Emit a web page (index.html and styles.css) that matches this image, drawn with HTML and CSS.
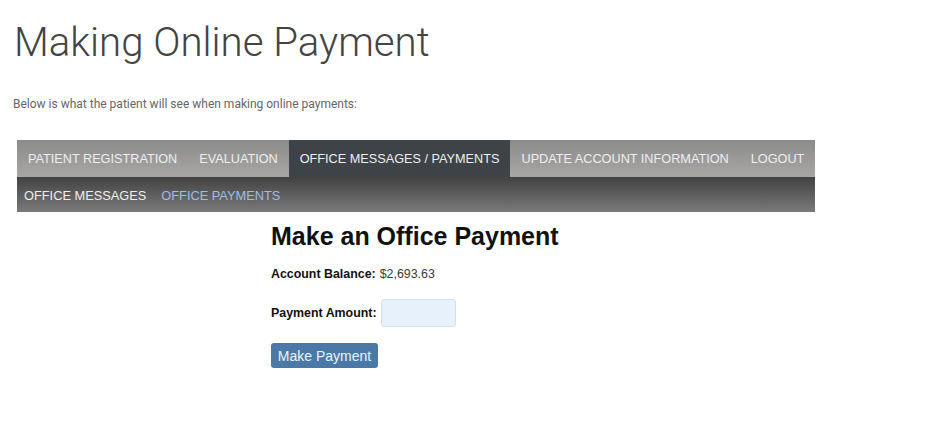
FILE: index.html
```html
<!DOCTYPE html>
<html lang="en">
<head>
    <meta charset="UTF-8">
    <meta name="viewport" content="width=device-width, initial-scale=1.0">
    <title>Making Online Payment</title>
    <link rel="stylesheet" href="styles.css">
</head>
<body>
    <h1 class="page-title">Making Online Payment</h1>
    <p class="intro">Below is what the patient will see when making online payments:</p>

    <div class="portal">
        <ul class="main-nav">
            <li><a href="#">Patient Registration</a></li>
            <li><a href="#">Evaluation</a></li>
            <li class="active"><a href="#">Office Messages / Payments</a></li>
            <li><a href="#">Update Account Information</a></li>
            <li><a href="#">Logout</a></li>
        </ul>
        <ul class="sub-nav">
            <li><a href="#">Office Messages</a></li>
            <li class="current"><a href="#">Office Payments</a></li>
        </ul>

        <div class="payment">
            <h2>Make an Office Payment</h2>
            <p class="field"><b>Account Balance:</b> <span class="balance">$2,693.63</span></p>
            <p class="field field-input">
                <label for="amount">Payment Amount:</label>
                <input type="text" id="amount">
            </p>
            <button type="button">Make Payment</button>
        </div>
    </div>
</body>
</html>
```

FILE: styles.css
```css
body {
    margin: 0;
    padding: 0 14px;
    background-color: #fff;
    font-family: Roboto, sans-serif;
}

.page-title {
    margin: 18px 0 0 0;
    font-weight: 300;
    font-size: 40.2px;
    line-height: 50px;
    color: #444;
}

.intro {
    margin: 29px 0 0 -1px;
    font-size: 12px;
    color: #666;
}

.portal {
    width: 798px;
    margin-top: 29px;
    margin-left: 3px;
    font-family: "Liberation Sans", Arial, sans-serif;
}

.main-nav,
.sub-nav {
    list-style: none;
    margin: 0;
    padding: 0;
    display: flex;
    overflow: hidden;
}

.main-nav li,
.sub-nav li {
    flex-shrink: 0;
    white-space: nowrap;
}

.main-nav {
    height: 37px;
    background: linear-gradient(#8b8b8b, #a9a7a5);
}

.main-nav a {
    display: block;
    padding: 2px 11px 0 11px;
    line-height: 35px;
    font-size: 12.7px;
    text-transform: uppercase;
    text-decoration: none;
    color: #eeeeee;
}

.main-nav .active a {
    background-color: #3e4348;
}

.sub-nav {
    height: 35px;
    background: linear-gradient(#424242, #7a7a7a);
}

.sub-nav a {
    display: block;
    padding: 2px 8px 0 7px;
    line-height: 33px;
    font-size: 12.8px;
    text-transform: uppercase;
    text-decoration: none;
    color: #eeeeee;
}

.sub-nav .current a {
    color: #9fbde6;
}

.payment {
    margin-left: 254px;
    color: #111;
}

.payment h2 {
    margin: 9px 0 0 0;
    font-size: 25px;
    line-height: 30px;
}

.field {
    display: flex;
    align-items: center;
    gap: 4px;
    margin: 16px 0 0 0;
    font-size: 12.4px;
    line-height: 15px;
    color: #111;
}

.field b,
.field label {
    font-weight: bold;
}

.balance {
    color: #3a3a3a;
}

.field-input {
    margin-top: 17px;
}

.field input {
    box-sizing: border-box;
    width: 75px;
    height: 28px;
    margin: 0;
    border: 1px solid #d3e1ee;
    border-radius: 3px;
    background-color: #e6f1fb;
}

button {
    display: block;
    margin-top: 16px;
    padding: 0;
    height: 25px;
    width: 107px;
    border: none;
    border-radius: 3px;
    background-color: #4a79a8;
    color: #eef3f8;
    font-family: "Liberation Sans", Arial, sans-serif;
    font-size: 14px;
}
```
